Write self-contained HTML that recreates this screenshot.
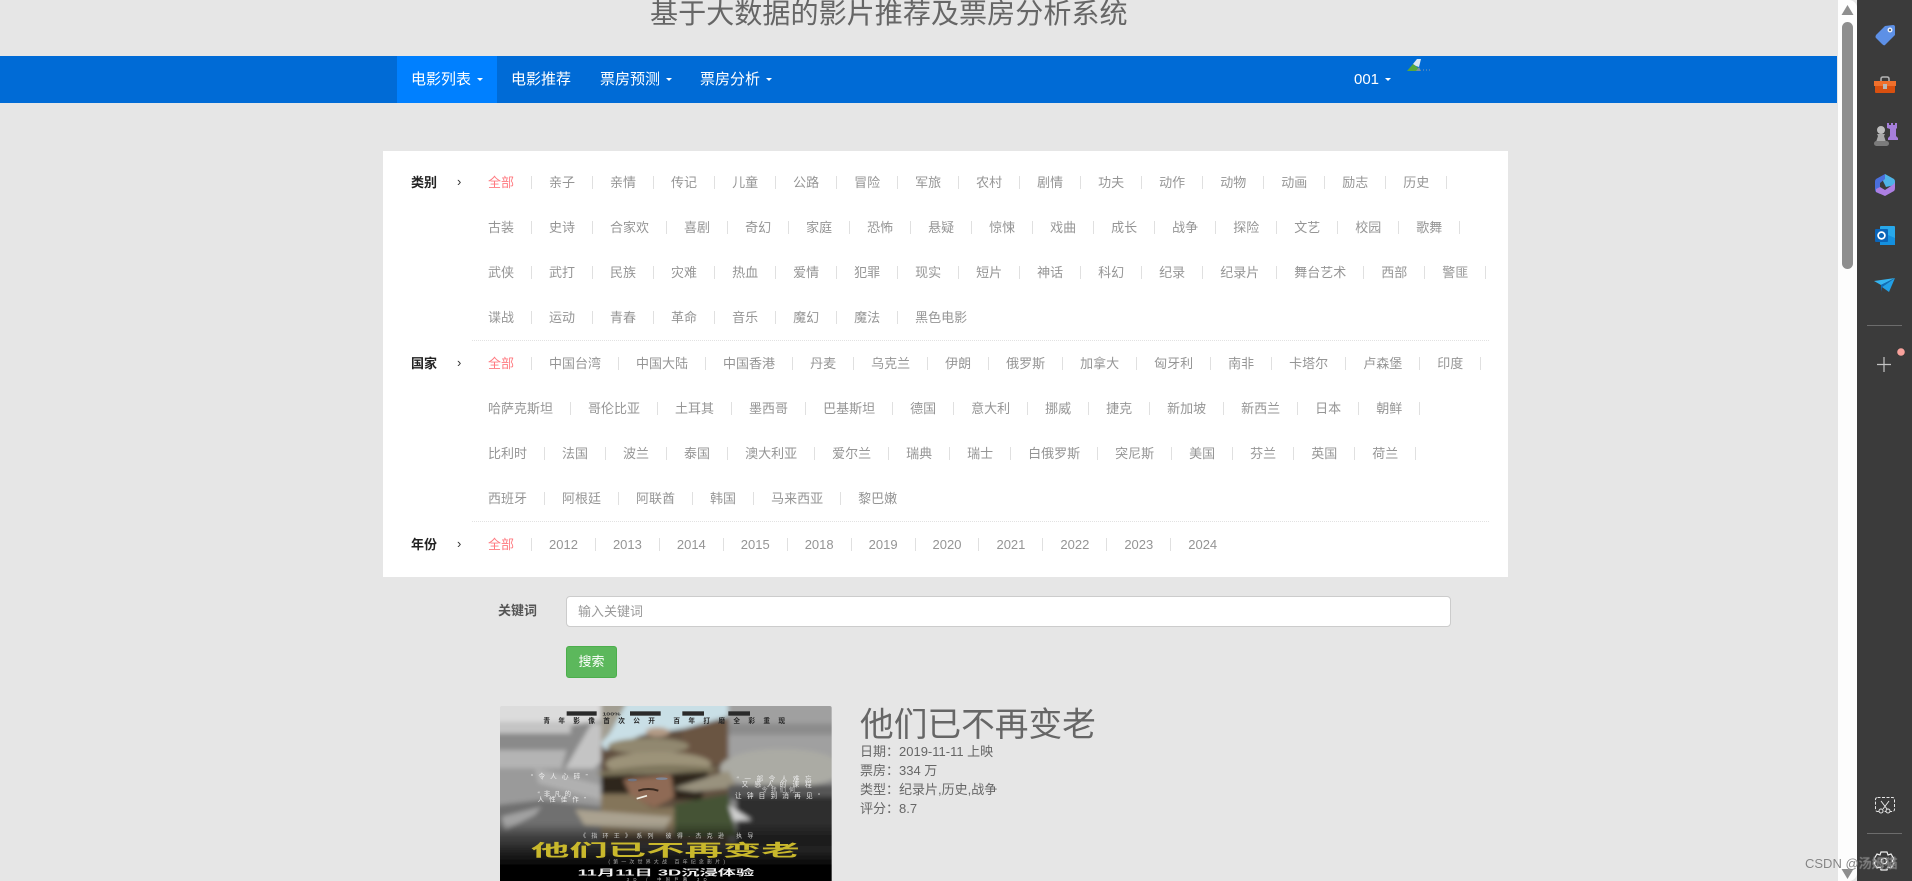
<!DOCTYPE html>
<html lang="zh-CN">
<head>
<meta charset="utf-8">
<title>基于大数据的影片推荐及票房分析系统</title>
<style>
html,body{margin:0;padding:0;width:1912px;height:881px;overflow:hidden;background:#e6e6e6;font-family:"Liberation Sans","Noto Sans CJK SC",sans-serif}
*{box-sizing:border-box}
.a{position:absolute;white-space:nowrap}
#title{left:650px;top:-5px;width:480px;font-size:28.1px;line-height:38px;color:#666}
#nav{left:0;top:56px;width:1837px;height:47px;background:#006bd6}
#act{left:397px;top:56px;width:100px;height:47px;background:#0080ff}
.n{top:71px;font-size:15px;line-height:18px;color:#fff}
.c{top:78px;width:0;height:0;border-left:3px solid transparent;border-right:3px solid transparent;border-top:3px solid #fff}
#panel{left:383px;top:151px;width:1125px;height:426px;background:#fff}
.r{left:488px;display:flex;font-size:13px;line-height:13px;height:13px;color:#959595}
.r span{display:block;padding-right:17px;margin-right:17px;border-right:1px solid #e0e0e0;height:13px;white-space:nowrap}
.r span.l{border-right:0;padding-right:0;margin-right:0}
.r span.on{color:#ff7a80}
.lb{left:411px;font-size:13px;line-height:13px;font-weight:bold;color:#222}
.ch{left:457px;font-size:13px;line-height:13px;color:#333}
.dot{left:472px;width:1017px;height:0;border-top:1px dotted #e2e2e2}
#kw{left:498px;top:604px;font-size:13px;line-height:14px;font-weight:bold;color:#555}
#inp{left:566px;top:596px;width:885px;height:31px;background:#fff;border:1px solid #ccc;border-radius:4px;font-size:13px;line-height:29px;padding-left:11px;color:#999}
#btn{left:566px;top:646px;width:51px;height:32px;background:#5cb85c;border:1px solid #4cae4c;border-radius:3px;color:#fff;font-size:13px;line-height:29px;text-align:center}
#mt{left:860px;top:703px;font-size:33.7px;line-height:44px;color:#666}
.i{left:860px;font-size:13px;line-height:19px;color:#666}
#side{left:1857px;top:0;width:55px;height:881px;background:#3b3b3b}
#sb{left:1838px;top:0;width:19px;height:881px;background:#fdfdfd;border-radius:0 8px 8px 0}
#th{left:1842px;top:22px;width:11px;height:247px;background:#8e8e8e;border-radius:6px}
#wm{left:1805px;top:856px;font-size:13px;line-height:16px;color:rgba(120,120,120,.9);text-shadow:0 0 1px rgba(255,255,255,.6)}
svg{position:absolute;display:block;overflow:hidden}
</style>
</head>
<body>
<div class="a" id="title">基于大数据的影片推荐及票房分析系统</div>
<div class="a" id="nav"></div>
<div class="a" id="act"></div>
<div class="a n" style="left:411px">电影列表</div><div class="a c" style="left:477px"></div>
<div class="a n" style="left:511px">电影推荐</div>
<div class="a n" style="left:600px">票房预测</div><div class="a c" style="left:666px"></div>
<div class="a n" style="left:700px">票房分析</div><div class="a c" style="left:766px"></div>
<div class="a n" style="left:1354px">001</div><div class="a c" style="left:1385px"></div>
<svg style="left:1404px;top:57px" width="30" height="17" viewBox="0 0 30 17">
<path d="M3 14L9 7l4 3 4 4z" fill="#58a83c"/><path d="M9 7l4-5h4l-2 8-3-1z" fill="#dbe6f2"/><path d="M15 10l2 4h-5z" fill="#7d8f9e"/>
<path d="M19 13h8" stroke="#7f9cb8" stroke-width="1" stroke-dasharray="1 2"/>
</svg>

<div class="a" id="panel"></div>
<div class="a lb" style="top:176px">类别</div><div class="a ch" style="top:175px">›</div>
<div class="a r" style="top:176px"><span class="on">全部</span><span>亲子</span><span>亲情</span><span>传记</span><span>儿童</span><span>公路</span><span>冒险</span><span>军旅</span><span>农村</span><span>剧情</span><span>功夫</span><span>动作</span><span>动物</span><span>动画</span><span>励志</span><span>历史</span></div>
<div class="a r" style="top:221px"><span>古装</span><span>史诗</span><span>合家欢</span><span>喜剧</span><span>奇幻</span><span>家庭</span><span>恐怖</span><span>悬疑</span><span>惊悚</span><span>戏曲</span><span>成长</span><span>战争</span><span>探险</span><span>文艺</span><span>校园</span><span>歌舞</span></div>
<div class="a r" style="top:266px"><span>武侠</span><span>武打</span><span>民族</span><span>灾难</span><span>热血</span><span>爱情</span><span>犯罪</span><span>现实</span><span>短片</span><span>神话</span><span>科幻</span><span>纪录</span><span>纪录片</span><span>舞台艺术</span><span>西部</span><span>警匪</span></div>
<div class="a r" style="top:311px"><span>谍战</span><span>运动</span><span>青春</span><span>革命</span><span>音乐</span><span>魔幻</span><span>魔法</span><span class="l">黑色电影</span></div>
<div class="a dot" style="top:340px"></div>
<div class="a lb" style="top:357px">国家</div><div class="a ch" style="top:356px">›</div>
<div class="a r" style="top:357px"><span class="on">全部</span><span>中国台湾</span><span>中国大陆</span><span>中国香港</span><span>丹麦</span><span>乌克兰</span><span>伊朗</span><span>俄罗斯</span><span>加拿大</span><span>匈牙利</span><span>南非</span><span>卡塔尔</span><span>卢森堡</span><span>印度</span></div>
<div class="a r" style="top:402px"><span>哈萨克斯坦</span><span>哥伦比亚</span><span>土耳其</span><span>墨西哥</span><span>巴基斯坦</span><span>德国</span><span>意大利</span><span>挪威</span><span>捷克</span><span>新加坡</span><span>新西兰</span><span>日本</span><span>朝鲜</span></div>
<div class="a r" style="top:447px"><span>比利时</span><span>法国</span><span>波兰</span><span>泰国</span><span>澳大利亚</span><span>爱尔兰</span><span>瑞典</span><span>瑞士</span><span>白俄罗斯</span><span>突尼斯</span><span>美国</span><span>芬兰</span><span>英国</span><span>荷兰</span></div>
<div class="a r" style="top:492px"><span>西班牙</span><span>阿根廷</span><span>阿联酋</span><span>韩国</span><span>马来西亚</span><span class="l">黎巴嫩</span></div>
<div class="a dot" style="top:521px"></div>
<div class="a lb" style="top:538px">年份</div><div class="a ch" style="top:537px">›</div>
<div class="a r" style="top:538px"><span class="on">全部</span><span>2012</span><span>2013</span><span>2014</span><span>2015</span><span>2018</span><span>2019</span><span>2020</span><span>2021</span><span>2022</span><span>2023</span><span class="l">2024</span></div>

<div class="a" id="kw">关键词</div>
<div class="a" id="inp">输入关键词</div>
<div class="a" id="btn">搜索</div>

<svg style="left:495px;top:700px" width="345" height="181" viewBox="0 0 1035 543">
<defs>
<clipPath id="pc"><rect x="15" y="18" width="995" height="540" rx="6"/></clipPath>
<linearGradient id="fade" x1="0" y1="0" x2="0" y2="1"><stop offset="0" stop-color="#000" stop-opacity="0"/><stop offset=".3" stop-color="#111" stop-opacity=".75"/><stop offset=".6" stop-color="#000" stop-opacity=".97"/><stop offset="1" stop-color="#000"/></linearGradient>
<filter id="bl" x="-5%" y="-5%" width="110%" height="110%"><feGaussianBlur stdDeviation="7"/></filter>
</defs>
<g clip-path="url(#pc)">
<g filter="url(#bl)">
<rect x="-30" y="-20" width="1100" height="600" fill="#8a8a8a"/>
<path d="M-30-20H330V60L220 75-30 70z" fill="#dcdcdc"/>
<path d="M-30 65H230L225 105-30 100z" fill="#c4c4c4"/>
<path d="M-30 100H225L215 150-30 150z" fill="#8a8a8a"/>
<path d="M-30 150H215L200 205-30 205z" fill="#b4b4b4"/>
<path d="M205 215L290 70 335 70 335 170 270 230z" fill="#c4c4c4"/>
<path d="M-30 205H320V320H-30z" fill="#9a9a9a"/>
<path d="M120 205L318 255 318 300 130 250z" fill="#b0b0b0"/>
<path d="M-30 320L140 300 320 320V420H-30z" fill="#707070"/>
<path d="M20 350L140 320 120 345 30 390z" fill="#a2a2a2"/>
<rect x="318" y="-20" width="382" height="450" fill="#60503f"/>
<path d="M410-20H700V50L570 85 440 105 330 150 318 130z" fill="#c9dfe6"/>
<path d="M318-20H410L345 100 318 130z" fill="#a29e92"/>
<path d="M560 88L700 55V190H560z" fill="#6b5443"/>
<ellipse cx="488" cy="96" rx="36" ry="14" fill="#b39b86"/>
<ellipse cx="460" cy="138" rx="122" ry="24" fill="#91886f"/>
<ellipse cx="490" cy="192" rx="158" ry="36" fill="#9c9379"/>
<path d="M305 218Q480 180 672 205L640 222Q480 205 330 235z" fill="#7d745b"/>
<path d="M318 228L640 215 620 300H318z" fill="#2f261d"/>
<path d="M385 238L528 224 538 292 478 322 408 290z" fill="#8f6a54"/>
<path d="M318 282H405L472 324 540 322 545 405H318z" fill="#84745a"/>
<path d="M240 328L530 350 508 392 268 375z" fill="#aaa290"/>
<path d="M538 312L700 282 725 410H538z" fill="#455335"/>
<rect x="700" y="-20" width="370" height="190" fill="#a0a0a0"/>
<rect x="700" y="70" width="370" height="35" fill="#8c8c8c"/>
<ellipse cx="860" cy="205" rx="185" ry="58" fill="#ababa4"/>
<path d="M535 265L700 212 725 262 600 275z" fill="#99927e"/>
<path d="M700 255H1070V300H700z" fill="#565656"/>
<path d="M725 290H1070V440H725z" fill="#2f2f2f"/>
<path d="M700 315L770 360 715 362z" fill="#d0d0d0"/>
<rect x="-30" y="370" width="1100" height="210" fill="url(#fade)"/>
</g>
<ellipse cx="500" cy="236" rx="18" ry="4" fill="#7e8ea8" opacity=".8"/>
<ellipse cx="412" cy="240" rx="14" ry="4" fill="#6a7890" opacity=".8"/>
<path d="M425 296L456 287" stroke="#f2f0e6" stroke-width="5"/>
<path d="M430 272Q460 262 490 272" stroke="#3a2a20" stroke-width="6" fill="none"/>
<g font-family="'Liberation Sans','Noto Sans CJK SC',sans-serif">
<rect x="215" y="34" width="90" height="13" fill="#2a2a2a"/><rect x="405" y="34" width="92" height="13" fill="#2a2a2a"/><rect x="562" y="34" width="65" height="13" fill="#2a2a2a"/><rect x="700" y="34" width="65" height="13" fill="#2a2a2a"/>
<text x="322" y="46" font-size="14" fill="#333" font-weight="bold" textLength="55" lengthAdjust="spacingAndGlyphs">100%</text>
<text x="145" y="69" font-size="20" fill="#262626" font-weight="bold" textLength="725" lengthAdjust="spacing">青年影像首次公开 百年打磨全彩重现</text>
<text x="108" y="236" font-size="20" fill="#eee" textLength="170" lengthAdjust="spacing">“令人心碎”</text>
<text x="128" y="288" font-size="19" fill="#eee" textLength="100" lengthAdjust="spacing">“非凡的</text>
<text x="128" y="304" font-size="19" fill="#eee" textLength="145" lengthAdjust="spacing">人性佳作”</text>
<text x="725" y="243" font-size="20" fill="#e8e8e8" textLength="225" lengthAdjust="spacing">“一部令人难忘</text>
<text x="740" y="259" font-size="20" fill="#e8e8e8" textLength="210" lengthAdjust="spacing">又感人的课程</text>
<text x="800" y="276" font-size="18" fill="#ccc" textLength="100" lengthAdjust="spacing">令我们何</text>
<text x="720" y="294" font-size="20" fill="#e8e8e8" textLength="255" lengthAdjust="spacing">让钟目到消再见”</text>
<text x="255" y="414" font-size="18" fill="#ccc" textLength="520" lengthAdjust="spacing">《指环王》系列 彼得·杰克逊 执导</text>
<text x="108" y="468" font-size="50" font-weight="bold" fill="#c9b82c" textLength="806" lengthAdjust="spacingAndGlyphs">他们已不再变老</text>
<text x="340" y="491" font-size="15" fill="#aaa" textLength="350" lengthAdjust="spacing">(第一次世界大战 百年纪念影片)</text>
<text x="248" y="526" font-size="25" font-weight="bold" fill="#f0f0f0" textLength="530" lengthAdjust="spacingAndGlyphs">11月11日 3D沉浸体验</text>
<text x="395" y="543" font-size="13" fill="#bbb" textLength="240" lengthAdjust="spacing">3D / 中国巨幕 3D</text>
</g>
</g>
</svg>

<div class="a" id="mt">他们已不再变老</div>
<div class="a i" style="top:742px">日期：2019-11-11 上映</div>
<div class="a i" style="top:761px">票房：334 万</div>
<div class="a i" style="top:780px">类型：纪录片,历史,战争</div>
<div class="a i" style="top:799px">评分：8.7</div>

<div class="a" id="side"></div>
<div class="a" id="sb"></div>
<div class="a" id="th"></div>
<svg style="left:1838px;top:0" width="19" height="881" viewBox="0 0 19 881">
<path d="M9.500 5L15.500 15H3.500z" fill="#8e8e8e"/>
<path d="M3.500 869H15.500L9.500 879z" fill="#8e8e8e"/>
</svg>
<svg style="left:1857px;top:0" width="55" height="881" viewBox="1857 0 55 881">
<path d="M1885 26l8-1q2 0 2 2v8l-10 10q-1 1-3-1l-6-6q-1-1 0-3z" fill="#5d90e6"/>
<circle cx="1890" cy="30" r="2.500" fill="#e8eef8"/><circle cx="1890" cy="30" r="1" fill="#444"/>
<path d="M1881 82v-3q0-2 2-2h4q2 0 2 2v3" fill="none" stroke="#b5b5b5" stroke-width="1.500"/>
<path d="M1874 81h22v5h-22z" fill="#f0702c"/><path d="M1875 86h20v6q0 1-1 1h-18q-1 0-1-1z" fill="#d9500f"/>
<rect x="1883" y="84" width="4" height="5" fill="#b8b8b8"/>
<path d="M1887 123h2v2h2v-2h2v2h2v-2h2v5l-1 1v7l2 2v2h-10v-2l2-2v-7l-3-1z" fill="#a67fdb"/>
<circle cx="1881" cy="130" r="4" fill="#bdbdbd"/><path d="M1877 134h8l-1 2 2 6h-10l2-6z" fill="#a8a8a8"/>
<rect x="1874" y="141" width="15" height="5" rx="2.500" fill="#7b7b7b"/>
<path d="M1885 174l9 5q1 1 1 3v3l-9 2-3-6z" fill="#4fb4e6"/>
<path d="M1885 174l-9 5q-1 1-1 3v7q0 2 1 3l4 2v-11l5-4z" fill="#4a6fdc"/>
<path d="M1876 192l9 4 9-5q1-1 1-3v-6l-1 2-9 6-5-3-4 2z" fill="#ad7fe2"/>
<rect x="1880" y="226" width="15" height="19" rx="1" fill="#28a8ea"/><path d="M1880 238l8-3 7 3v7h-15z" fill="#1490df"/>
<rect x="1875" y="229" width="13" height="13" rx="1" fill="#0a64b8"/>
<circle cx="1881.500" cy="235.500" r="3.400" fill="none" stroke="#fff" stroke-width="1.700"/>
<path d="M1874 281l21-3-14 7z" fill="#34b4f0"/><path d="M1895 278l-6 14-7-5z" fill="#22a0e6"/><path d="M1881 285l14-7-13 9-1 5z" fill="#0f6cb8"/>
<path d="M1867 325.500h35" stroke="#6c6c6c"/>
<path d="M1884 357v15M1877 364.500h14" stroke="#c4c4c4" stroke-width="1.200"/>
<circle cx="1901" cy="352" r="3.800" fill="#f8a29c"/>
<rect x="1875.500" y="797.500" width="19" height="14" rx="2" fill="#3b3b3b" stroke="#e6e6e6" stroke-dasharray="3 1.500"/>
<path d="M1881 801l6 8M1889 801l-6 8" stroke="#e6e6e6" fill="none"/>
<circle cx="1881" cy="811" r="2" fill="#3b3b3b" stroke="#e6e6e6"/><circle cx="1888" cy="811" r="2" fill="#3b3b3b" stroke="#e6e6e6"/>
<path d="M1867 833.500h35" stroke="#6c6c6c"/>
<path d="M1881 852h6l1 3 3-1 3 5-2 2 2 2-3 5-3-1-1 3h-6l-1-3-3 1-3-5 2-2-2-2 3-5 3 1z" fill="none" stroke="#eee" stroke-width="1.200"/>
<circle cx="1884" cy="861" r="2.800" fill="none" stroke="#eee" stroke-width="1.200"/>
</svg>
<div class="a" id="wm">CSDN @汤姆猫</div>
</body>
</html>
